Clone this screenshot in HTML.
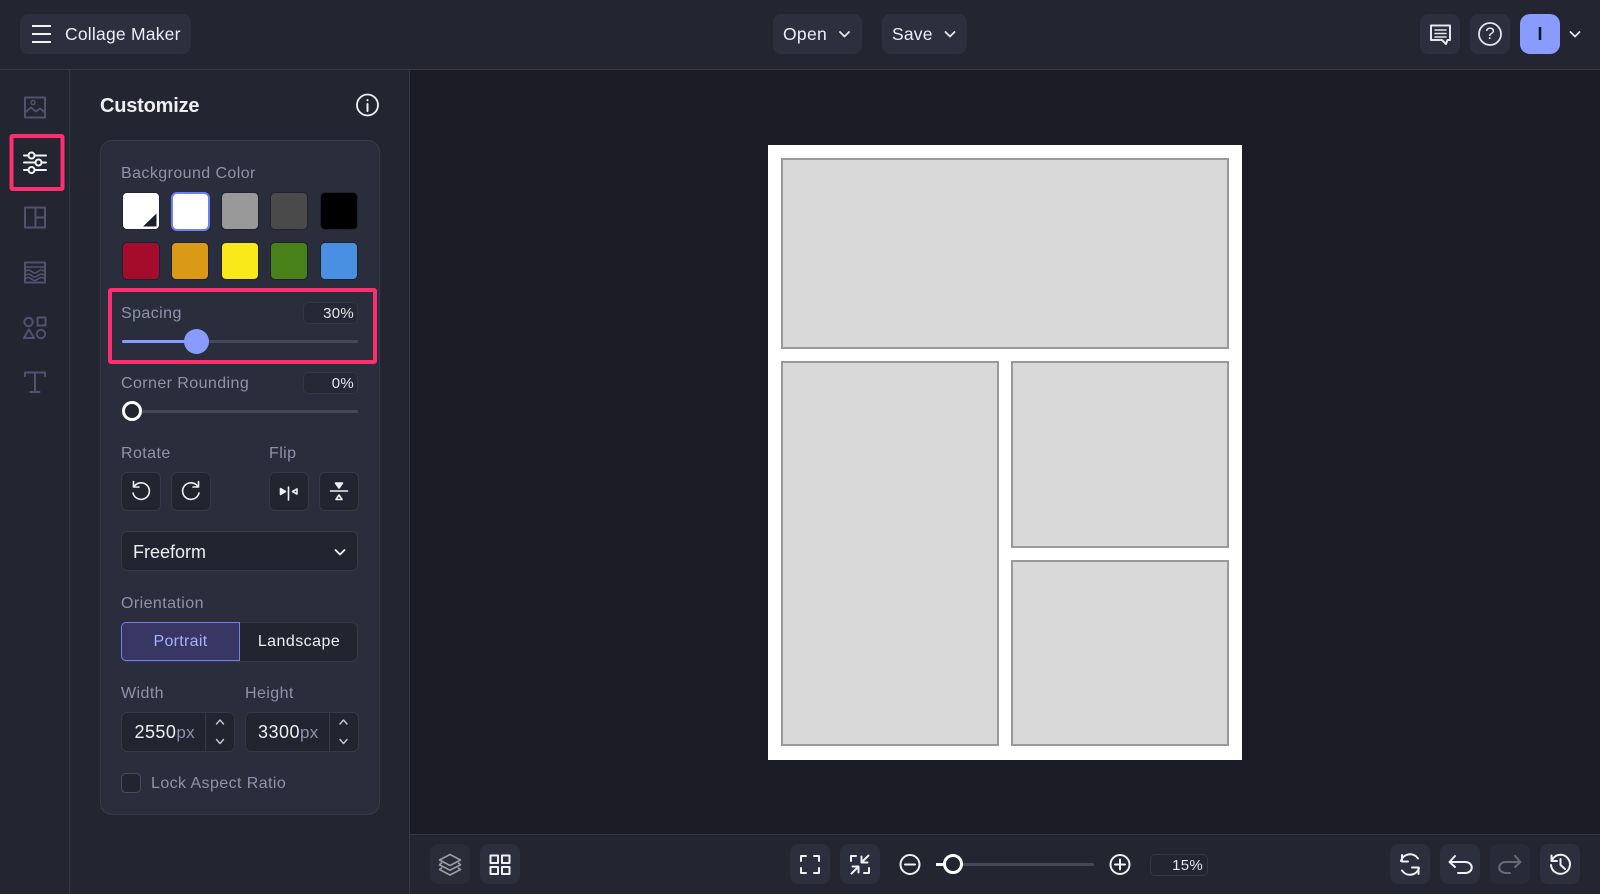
<!DOCTYPE html>
<html lang="en"><head><meta charset="utf-8"><title>Collage Maker</title>
<style>
html,body{margin:0;padding:0;background:#1b1c26;width:1600px;height:894px;overflow:hidden}
body{position:relative;font-family:"Liberation Sans",sans-serif;color:#eeeef2}
div{position:absolute;box-sizing:border-box}
.t{white-space:nowrap;line-height:20px;height:20px}
.l{color:#8f92ab;font-size:16px;letter-spacing:.42px}
.btn{background:#2c2f3e;border-radius:8px;height:40px;width:40px;top:14px}
.bb{top:844px}
.sw{width:38px;height:38px;border-radius:5px;border:1px solid #1f2230}
.val{background:#262935;border:1px solid #333645;border-radius:5px;width:55px;height:22px;left:303px;text-align:right;font-size:15px;line-height:21px;padding-right:3px;color:#e4e5ea;letter-spacing:.3px}
.track{height:3px;background:#454859;border-radius:2px}
.dk{background:#22242f;border:1px solid #363948;border-radius:6px}
</style></head><body>
<div style="left:0;top:0;width:1600px;height:70px;background:#232530;border-bottom:1px solid #373a48"></div>
<div style="left:0;top:70px;width:70px;height:824px;background:#232530;border-right:1px solid #343745"></div>
<div style="left:70px;top:70px;width:340px;height:824px;background:#232530;border-right:1px solid #343745"></div>
<div style="left:410px;top:834px;width:1190px;height:60px;background:#232530;border-top:1px solid #343745"></div>

<div style="left:20px;top:14px;width:171px;height:40px;background:#2c2f3e;border-radius:8px"></div>
<div class="t" style="left:65px;top:24px;font-size:17.5px;letter-spacing:.22px">Collage Maker</div>
<div style="left:773px;top:14px;width:89px;height:40px;background:#2c2f3e;border-radius:8px"></div>
<div class="t" style="left:783px;top:24px;font-size:17.5px;letter-spacing:.3px">Open</div>
<div style="left:882px;top:14px;width:85px;height:40px;background:#2c2f3e;border-radius:8px"></div>
<div class="t" style="left:892px;top:24px;font-size:17.5px;letter-spacing:.2px">Save</div>
<div class="btn" style="left:1420px"></div>
<div class="btn" style="left:1470px"></div>
<div class="t" style="left:1484px;top:24px;font-size:17px;width:12px;text-align:center">?</div>
<div class="btn" style="left:1520px;background:#8a9bff;border-radius:10px"></div>
<div class="t" style="left:1520px;top:24px;width:40px;text-align:center;font-size:18px;font-weight:bold;color:#15161e">I</div>

<div class="t" style="left:100px;top:96px;font-size:20px;font-weight:bold;letter-spacing:-.2px">Customize</div>

<div style="left:100px;top:140px;width:280px;height:675px;background:#2a2d3b;border:1px solid #373a4a;border-radius:12px"></div>
<div class="t l" style="left:121px;top:164px">Background Color</div>

<div class="sw" style="left:122px;top:192px;background:#fff"></div>
<div class="sw" style="left:171px;top:192px;width:39px;height:39px;background:#fff;border:2px solid #6b80f2;border-radius:6px"></div>
<div class="sw" style="left:221px;top:192px;background:#999"></div>
<div class="sw" style="left:270px;top:192px;background:#4a4a4a"></div>
<div class="sw" style="left:319.5px;top:192px;background:#000"></div>
<div class="sw" style="left:122px;top:242px;background:#a50b2b"></div>
<div class="sw" style="left:171px;top:242px;background:#da9a17"></div>
<div class="sw" style="left:221px;top:242px;background:#f9e81a"></div>
<div class="sw" style="left:270px;top:242px;background:#488119"></div>
<div class="sw" style="left:319.5px;top:242px;background:#4a90e2"></div>

<div class="t l" style="left:121px;top:304px">Spacing</div>
<div class="val" style="top:302px">30%</div>
<div class="track" style="left:122px;top:340px;width:236px"></div>
<div style="left:122px;top:340px;width:75px;height:3px;background:#8a9bff;border-radius:2px"></div>
<div style="left:184px;top:329px;width:25px;height:25px;border-radius:50%;background:#8a9bff"></div>

<div class="t l" style="left:121px;top:374px">Corner Rounding</div>
<div class="val" style="top:372px">0%</div>
<div class="track" style="left:122px;top:410px;width:236px"></div>
<div style="left:122px;top:401px;width:20px;height:20px;border-radius:50%;background:#22242f;border:3px solid #fff"></div>

<div class="t l" style="left:121px;top:444px">Rotate</div>
<div class="t l" style="left:269px;top:444px">Flip</div>
<div class="dk" style="left:121px;top:472px;width:40px;height:39px"></div>
<div class="dk" style="left:171px;top:472px;width:40px;height:39px"></div>
<div class="dk" style="left:269px;top:472px;width:40px;height:39px"></div>
<div class="dk" style="left:319px;top:472px;width:40px;height:39px"></div>

<div class="dk" style="left:121px;top:531px;width:237px;height:40px"></div>
<div class="t" style="left:133px;top:542px;font-size:18px">Freeform</div>

<div class="t l" style="left:121px;top:594px">Orientation</div>
<div class="dk" style="left:121px;top:622px;width:237px;height:39.5px"></div>
<div style="left:121px;top:622px;width:119px;height:39px;background:#383763;border:1.5px solid #6f80ea;border-radius:5px 0 0 5px"></div>
<div class="t" style="left:121px;top:632px;width:119px;text-align:center;font-size:16px;letter-spacing:.3px;color:#a5b0ff">Portrait</div>
<div class="t" style="left:240px;top:632px;width:118px;text-align:center;font-size:16px;letter-spacing:.45px">Landscape</div>

<div class="t l" style="left:121px;top:684px">Width</div>
<div class="t l" style="left:245px;top:684px">Height</div>
<div class="dk" style="left:121px;top:711.5px;width:114px;height:40px"></div>
<div style="left:205px;top:712px;width:1px;height:39px;background:#363948"></div>
<div class="t" style="left:134.5px;top:722px;font-size:18px;letter-spacing:.45px">2550<span style="color:#8f92ab;font-size:17px;letter-spacing:.3px">px</span></div>
<div class="dk" style="left:245px;top:711.5px;width:113.5px;height:40px"></div>
<div style="left:329px;top:712px;width:1px;height:39px;background:#363948"></div>
<div class="t" style="left:258px;top:722px;font-size:18px;letter-spacing:.5px">3300<span style="color:#8f92ab;font-size:17px;letter-spacing:.3px">px</span></div>

<div style="left:121px;top:772.5px;width:20px;height:20px;background:#22242f;border:1.5px solid #474b61;border-radius:5px"></div>
<div class="t l" style="left:151px;top:774px">Lock Aspect Ratio</div>

<!-- canvas -->
<div style="left:768px;top:145px;width:474px;height:615px;background:#fff"></div>
<div style="left:781px;top:158px;width:448px;height:191px;background:#d9d9d9;border:2px solid #999"></div>
<div style="left:781px;top:361px;width:218px;height:385px;background:#d9d9d9;border:2px solid #999"></div>
<div style="left:1011px;top:361px;width:218px;height:187px;background:#d9d9d9;border:2px solid #999"></div>
<div style="left:1011px;top:560px;width:218px;height:186px;background:#d9d9d9;border:2px solid #999"></div>

<!-- bottom bar -->
<div class="btn bb" style="left:430px;background:#2a2c39"></div>
<div class="btn bb" style="left:480px"></div>
<div class="btn bb" style="left:790px"></div>
<div class="btn bb" style="left:840px"></div>
<div class="track" style="left:936px;top:863px;width:158px"></div>
<div style="left:936px;top:863px;width:17px;height:3px;background:#fff"></div>
<div style="left:943px;top:854px;width:20px;height:20px;border-radius:50%;background:#22242f;border:3px solid #fff"></div>
<div class="val" style="left:1150px;top:854px;width:58px;background:#232530;padding-right:4px">15%</div>
<div class="btn bb" style="left:1390px"></div>
<div class="btn bb" style="left:1440px"></div>
<div class="btn bb" style="left:1490px;background:#282a37"></div>
<div class="btn bb" style="left:1540px"></div>

<svg width="1600" height="894" viewBox="0 0 1600 894" style="position:absolute;left:0;top:0;pointer-events:none" fill="none" stroke-linecap="round" stroke-linejoin="round">
<!-- top -->
<g stroke="#f4f4f6" stroke-width="2"><path d="M32 26H51M32 34H51M32 42H51" stroke-linecap="butt"/></g>
<g stroke="#e6e6ea" stroke-width="1.8">
<path d="M840 32l4.500 4.500 4.500-4.500M945.500 32l4.500 4.500 4.500-4.500M1570.500 32l4.500 4.500 4.500-4.500"/>
<path d="M1431 25.500H1450V40H1447.500L1446 44L1442 40H1431Z" stroke-width="2"/>
<path d="M1435 30H1446M1435 33.500H1446M1435 37H1446" stroke-width="1.500"/>
<circle cx="1490" cy="34" r="11"/>
</g>
<circle cx="367.500" cy="105" r="10.500" stroke="#f2f2f5" stroke-width="1.800"/>
<path d="M367.500 104V111M367.500 100V100.300" stroke="#f2f2f5" stroke-width="2"/>
<!-- sidebar -->
<g stroke="#4f5370" stroke-width="2">
<rect x="25" y="97.500" width="20" height="20"/>
<circle cx="33" cy="102.500" r="2" stroke-width="1.500"/>
<path d="M25 112.500L31 107.500L36 111.500L40 108.500L45 112.500" stroke-width="1.800"/>
<rect x="25" y="207.500" width="20" height="20"/>
<path d="M35.500 207.500V227.500M35.500 217.500H45"/>
<rect x="25" y="262.500" width="20" height="20"/>
<path d="M25 267H45" stroke-width="1.600"/>
<path d="M25 271.500c3-2 4-2 6.500 0s4 2 6.500 0s4-2 7 0M25 275.500c3-2 4-2 6.500 0s4 2 6.500 0s4-2 7 0M25 279c3-2 4-2 6.500 0s4 2 6.500 0s4-2 7 0" stroke-width="1.500"/>
<circle cx="28.500" cy="322" r="4.200"/>
<rect x="37.500" y="317.500" width="8" height="8"/>
<path d="M29 329.500L34 338H24Z"/>
<circle cx="41" cy="334" r="4.200"/>
<path d="M25 376V372.500H45V376M35 372.500V392M30.500 392H39.500"/>
</g>
<g stroke="#f4f4f6" stroke-width="2">
<path d="M24 155.500H46M24 162.500H46M24 170H46"/>
<g fill="#232530"><circle cx="31.500" cy="155.500" r="3"/><circle cx="38.500" cy="162.500" r="3"/><circle cx="31.500" cy="170" r="3"/></g>
</g>
<!-- pink -->
<rect x="11.500" y="136" width="51" height="53" stroke="#ff2e6e" stroke-width="4" rx="1"/>
<rect x="110" y="290" width="265" height="72" stroke="#ff2e6e" stroke-width="4" rx="1"/>
<!-- swatch corner -->
<path d="M156.500 213.500V226.500H143Z" fill="#1d1e2b"/>
<!-- rotate / flip -->
<g stroke="#f0f0f3" stroke-width="1.600">
<path d="M134.500 486A8.300 8.300 0 1 1 133 493"/><path d="M133.500 481.500V487H139"/>
<path d="M197.500 486A8.300 8.300 0 1 0 199 493"/><path d="M198.500 481.500V487H193"/>
<path d="M288.500 487V500"/>
<path d="M280.500 488.500L285.500 491.500L280.500 494.500Z" fill="#f0f0f3"/>
<path d="M297 489V494L292.500 491.500Z"/>
<path d="M330.500 491H347.500"/>
<path d="M335.500 483H342.500L339 488Z" fill="#f0f0f3"/>
<path d="M336 499.500H342L339 495Z"/>
<path d="M335.500 550L340 554.500L344.500 550" stroke-width="1.800"/>
</g>
<g stroke="#c9cad3" stroke-width="1.400">
<path d="M216.500 724L220 720L223.500 724M216.500 739.500L220 743.500L223.500 739.500"/>
<path d="M340 724L343.500 720L347 724M340 739.500L343.500 743.500L347 739.500"/>
</g>
<!-- bottom -->
<g stroke="#9a9aa0" stroke-width="1.700">
<path d="M450 854.500L460.500 860L450 865.500L439.500 860Z"/>
<path d="M441.500 863L439.500 864.800L450 870.300L460.500 864.800L458.500 863"/>
<path d="M441.500 868L439.500 869.500L450 875L460.500 869.500L458.500 868"/>
</g>
<g stroke="#f0f0f3" stroke-width="2">
<rect x="490.500" y="855.500" width="7.500" height="7.500"/><rect x="502" y="855.500" width="7.500" height="7.500"/>
<rect x="490.500" y="867" width="7.500" height="7"/><rect x="502" y="867" width="7.500" height="7"/>
<path d="M801 861V856H806M819 861V856H814M801 868V873H806M819 868V873H814"/>
<path d="M851 861V856H856M869 868V873H864M861.500 862.500H867.500M861.500 862.500V856.500M861.500 862.500L868.500 855.500M858.500 866.500H852.500M858.500 866.500V872.500M858.500 866.500L851.500 873.500"/>
<circle cx="910" cy="864.500" r="9.500"/><path d="M905 864.500H915"/>
<circle cx="1120" cy="864.500" r="9.500"/><path d="M1115 864.500H1125M1120 859.500V869.500"/>
<path d="M1401 861A9.500 9.500 0 0 1 1418 858.500"/><path d="M1402 855V861.500H1408"/>
<path d="M1419 868A9.500 9.500 0 0 1 1402 870.500"/><path d="M1418.500 874V867.500H1412"/>
<path d="M1455 856L1449.500 862L1455 867M1449.500 862H1465C1474 862 1474 873 1465 873H1458"/>
<path d="M1552 860A9.500 9.500 0 1 1 1551 865"/><path d="M1551.500 855.500V861H1557"/><path d="M1560.500 859V865L1565 869"/>
</g>
<path d="M1515 856L1520.500 862L1515 867M1520.500 862H1506C1497 862 1497 873 1506 873H1510" stroke="#696b73" stroke-width="2"/>
</svg>
</body></html>
